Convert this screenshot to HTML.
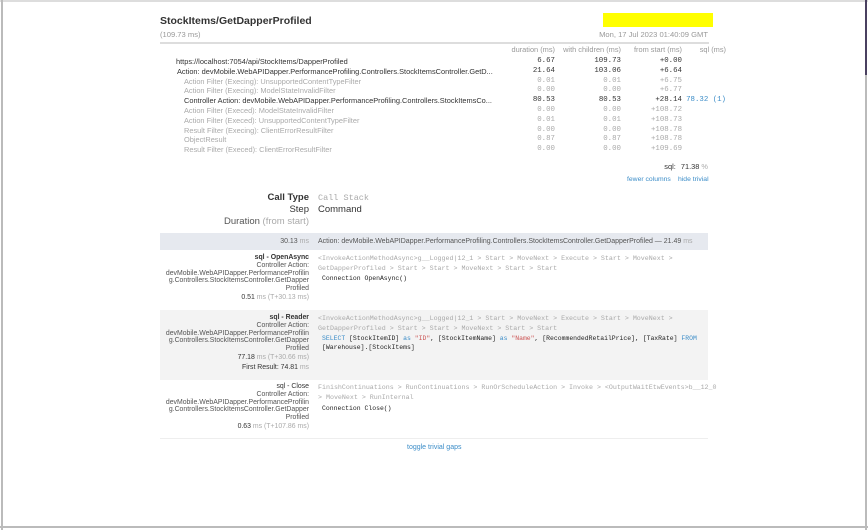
<!DOCTYPE html>
<html><head><style>
body{margin:0;width:868px;height:530px;background:#fff;font-family:"Liberation Sans",sans-serif;position:relative;overflow:hidden}
.a{position:absolute;white-space:nowrap}
.m{font-family:"Liberation Mono",monospace}
.r{text-align:right}
.row{position:absolute;left:160px;width:568px;height:10px;font-size:7.4px}
.row span{position:absolute;white-space:nowrap;top:0}
.g{color:#aaa}
.lbl{position:absolute;right:559px;text-align:right;font-size:6.9px;color:#555;line-height:7.8px}
.stk{position:absolute;left:318px;font-size:6.65px;color:#aaa;line-height:9.5px;font-family:"Liberation Mono",monospace}
.cmd{position:absolute;left:322px;font-size:6.45px;color:#222;font-family:"Liberation Mono",monospace}
</style></head><body>
<div class="a" style="left:0;top:0;width:868px;height:2px;background:#ddd"></div>
<div class="a" style="left:1px;top:0;width:2px;height:530px;background:#bbb"></div>
<div class="a" style="left:865px;top:0;width:2px;height:530px;background:#bbb"></div>
<div class="a" style="left:865px;top:0;width:2px;height:75px;background:#4a4060"></div>
<div class="a" style="left:0;top:526px;width:868px;height:2px;background:#bbb"></div>

<div class="a" style="left:160px;top:15px;font-size:10.5px;font-weight:bold;color:#333">StockItems/GetDapperProfiled</div>
<div class="a" style="left:603px;top:13px;width:110px;height:14px;background:#ffff00"></div>
<div class="a" style="left:160px;top:30px;font-size:7.6px;color:#999">(109.73 ms)</div>
<div class="a" style="right:160px;top:30px;font-size:7.6px;color:#999">Mon, 17 Jul 2023 01:40:09 GMT</div>
<div class="a" style="left:160px;top:42px;width:549px;height:2px;background:#ddd"></div>

<div class="row" style="top:45px;color:#999">
<span style="right:173px">duration (ms)</span><span style="right:107px">with children (ms)</span><span style="right:46px">from start (ms)</span><span style="right:2px">sql (ms)</span></div>

<div class="row" style="top:57px;color:#333"><span style="left:16px">https://localhost:7054/api/StockItems/DapperProfiled</span><span class="m" style="right:173px">6.67</span><span class="m" style="right:107px">109.73</span><span class="m" style="right:46px">+0.00</span></div>
<div class="row" style="top:67px;color:#333"><span style="left:17px">Action: devMobile.WebAPIDapper.PerformanceProfiling.Controllers.StockItemsController.GetD...</span><span class="m" style="right:173px">21.64</span><span class="m" style="right:107px">103.06</span><span class="m" style="right:46px">+6.64</span></div>
<div class="row g" style="top:77px"><span style="left:24px">Action Filter (Execing): UnsupportedContentTypeFilter</span><span class="m" style="right:173px">0.01</span><span class="m" style="right:107px">0.01</span><span class="m" style="right:46px">+6.75</span></div>
<div class="row g" style="top:86px"><span style="left:24px">Action Filter (Execing): ModelStateInvalidFilter</span><span class="m" style="right:173px">0.00</span><span class="m" style="right:107px">0.00</span><span class="m" style="right:46px">+6.77</span></div>
<div class="row" style="top:96px;color:#333"><span style="left:24px">Controller Action: devMobile.WebAPIDapper.PerformanceProfiling.Controllers.StockItemsCo...</span><span class="m" style="right:173px">80.53</span><span class="m" style="right:107px">80.53</span><span class="m" style="right:46px">+28.14</span><span class="m" style="right:2px;color:#3c8dc8">78.32 (1)</span></div>
<div class="row g" style="top:106px"><span style="left:24px">Action Filter (Execed): ModelStateInvalidFilter</span><span class="m" style="right:173px">0.00</span><span class="m" style="right:107px">0.00</span><span class="m" style="right:46px">+108.72</span></div>
<div class="row g" style="top:116px"><span style="left:24px">Action Filter (Execed): UnsupportedContentTypeFilter</span><span class="m" style="right:173px">0.01</span><span class="m" style="right:107px">0.01</span><span class="m" style="right:46px">+108.73</span></div>
<div class="row g" style="top:126px"><span style="left:24px">Result Filter (Execing): ClientErrorResultFilter</span><span class="m" style="right:173px">0.00</span><span class="m" style="right:107px">0.00</span><span class="m" style="right:46px">+108.78</span></div>
<div class="row g" style="top:135px"><span style="left:24px">ObjectResult</span><span class="m" style="right:173px">0.87</span><span class="m" style="right:107px">0.87</span><span class="m" style="right:46px">+108.78</span></div>
<div class="row g" style="top:145px"><span style="left:24px">Result Filter (Execed): ClientErrorResultFilter</span><span class="m" style="right:173px">0.00</span><span class="m" style="right:107px">0.00</span><span class="m" style="right:46px">+109.69</span></div>

<div class="a" style="right:160px;top:162px;font-size:7.4px;color:#333">sql: <span style="margin-left:3px">71.38</span> <span style="color:#aaa">%</span></div>
<div class="a" style="left:627px;top:176px;font-size:6.8px;color:#3c8dc8">fewer columns</div>
<div class="a" style="left:678px;top:176px;font-size:6.8px;color:#3c8dc8">hide trivial</div>

<div class="a r" style="right:559px;top:192px;font-size:9.5px;font-weight:bold;color:#333">Call Type</div>
<div class="a m" style="left:318px;top:193px;font-size:8.5px;color:#aaa">Call Stack</div>
<div class="a r" style="right:559px;top:204px;font-size:9.5px;color:#333">Step</div>
<div class="a" style="left:318px;top:204px;font-size:9.5px;color:#333">Command</div>
<div class="a r" style="right:559px;top:216px;font-size:9.5px;color:#555">Duration <span style="color:#aaa">(from start)</span></div>

<div class="a" style="left:160px;top:233px;width:548px;height:17px;background:#e6e9ef"></div>
<div class="a" style="right:559px;top:238px;font-size:7px;color:#555">30.13 <span style="color:#aaa">ms</span></div>
<div class="a" style="left:318px;top:238px;font-size:7px;color:#555">Action: devMobile.WebAPIDapper.PerformanceProfiling.Controllers.StockItemsController.GetDapperProfiled — 21.49 <span style="color:#aaa">ms</span></div>

<div class="lbl" style="top:254px"><b style="color:#333">sql - OpenAsync</b><br>Controller Action:<br>devMobile.WebAPIDapper.PerformanceProfilin<br>g.Controllers.StockItemsController.GetDapper<br>Profiled<br><span style="line-height:10px;color:#333">0.51 <span style="color:#aaa">ms (T+30.13 ms)</span></span></div>
<div class="stk" style="top:254px">&lt;InvokeActionMethodAsync&gt;g__Logged|12_1 &gt; Start &gt; MoveNext &gt; Execute &gt; Start &gt; MoveNext &gt;<br>GetDapperProfiled &gt; Start &gt; Start &gt; MoveNext &gt; Start &gt; Start</div>
<div class="cmd" style="top:275px">Connection OpenAsync()</div>

<div class="a" style="left:160px;top:310px;width:548px;height:70px;background:#f3f3f3"></div>
<div class="lbl" style="top:314px"><b style="color:#333">sql - Reader</b><br>Controller Action:<br>devMobile.WebAPIDapper.PerformanceProfilin<br>g.Controllers.StockItemsController.GetDapper<br>Profiled<br><span style="line-height:10px;color:#333">77.18 <span style="color:#aaa">ms (T+30.66 ms)</span></span><br><span style="line-height:10px;color:#333">First Result: 74.81 <span style="color:#aaa">ms</span></span></div>
<div class="stk" style="top:314px">&lt;InvokeActionMethodAsync&gt;g__Logged|12_1 &gt; Start &gt; MoveNext &gt; Execute &gt; Start &gt; MoveNext &gt;<br>GetDapperProfiled &gt; Start &gt; Start &gt; MoveNext &gt; Start &gt; Start</div>
<div class="cmd" style="top:335px;line-height:8.5px"><span style="color:#3c8dc8">SELECT</span> [StockItemID] <span style="color:#3c8dc8">as</span> <span style="color:#c55">"ID"</span>, [StockItemName] <span style="color:#3c8dc8">as</span> <span style="color:#c55">"Name"</span>, [RecommendedRetailPrice], [TaxRate] <span style="color:#3c8dc8">FROM</span><br>[Warehouse].[StockItems]</div>

<div class="lbl" style="top:383px"><b style="color:#333;font-weight:normal">sql - Close</b><br>Controller Action:<br>devMobile.WebAPIDapper.PerformanceProfilin<br>g.Controllers.StockItemsController.GetDapper<br>Profiled<br><span style="line-height:10px;color:#333">0.63 <span style="color:#aaa">ms (T+107.86 ms)</span></span></div>
<div class="stk" style="top:383px">FinishContinuations &gt; RunContinuations &gt; RunOrScheduleAction &gt; Invoke &gt; &lt;OutputWaitEtwEvents&gt;b__12_0<br>&gt; MoveNext &gt; RunInternal</div>
<div class="cmd" style="top:405px">Connection Close()</div>

<div class="a" style="left:160px;top:438px;width:548px;height:1px;background:#eee"></div>
<div class="a" style="left:407px;top:444px;font-size:7px;color:#3c8dc8">toggle trivial gaps</div>
</body></html>
